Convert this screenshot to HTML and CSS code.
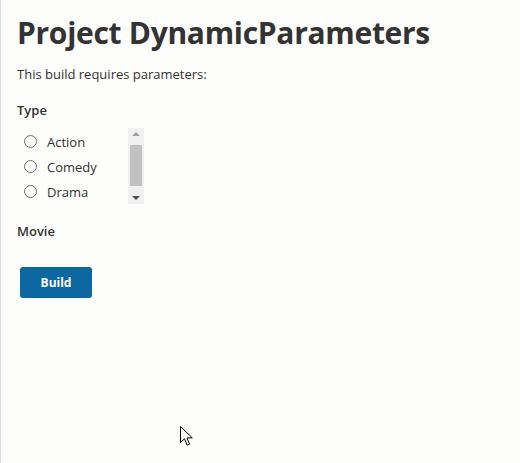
FILE: index.html
```html
<!DOCTYPE html>
<html lang="en">
<head>
<meta charset="utf-8">
<title>Project DynamicParameters</title>
<link rel="stylesheet" href="styles.css">
</head>
<body>
<main class="page">
  <h1 class="title">Project DynamicParameters</h1>
  <p class="intro">This build requires parameters:</p>

  <form class="params">
    <div class="param">
      <div class="param-name">Type</div>
      <div class="choice-box">
        <div class="choice-list">
          <label class="choice"><input type="radio" name="type" value="Action"><span>Action</span></label>
          <label class="choice"><input type="radio" name="type" value="Comedy"><span>Comedy</span></label>
          <label class="choice"><input type="radio" name="type" value="Drama"><span>Drama</span></label>
        </div>
        <div class="scrollbar" aria-hidden="true">
          <span class="arrow arrow-up"></span>
          <span class="track"><span class="thumb"></span></span>
          <span class="arrow arrow-down"></span>
        </div>
      </div>
    </div>

    <div class="param">
      <div class="param-name">Movie</div>
    </div>

    <button type="button" class="build-btn">Build</button>
  </form>

  <svg class="pointer" width="13" height="21" viewBox="0 0 13 21" aria-hidden="true">
    <path d="M0.5 0.5 L0.5 16.5 L4.5 12.8 L7.2 19.2 L9.6 18.2 L7 11.9 L12.3 11.9 Z" fill="#fff" stroke="#000" stroke-width="1" stroke-linejoin="miter"/>
  </svg>
</main>
</body>
</html>
```

FILE: styles.css
```css
html, body {
  margin: 0;
  height: 100%;
}

body {
  background: #fdfdfb;
  border-left: 1px solid #d5dfe9;
  box-sizing: border-box;
  font-family: "Open Sans", "Noto Sans", "Liberation Sans", sans-serif;
  color: #333;
}

.page {
  position: relative;
  min-height: 100%;
  padding: 13px 0 0 16px;
  box-sizing: border-box;
}

.title {
  margin: 0;
  font-size: 30px;
  line-height: 40px;
  font-weight: 700;
  color: #333;
  letter-spacing: -0.3px;
}

.intro {
  margin: 12px 0 0;
  font-size: 13px;
  line-height: 18px;
}

.params {
  display: flex;
  flex-direction: column;
  align-items: flex-start;
}

.param-name {
  margin-top: 18px;
  font-size: 13px;
  line-height: 18px;
  font-weight: 600;
}

.choice-box {
  display: flex;
  margin-top: 9px;
  height: 76px;
}

.choice-list {
  width: 111px;
  height: 76px;
  overflow: hidden;
  padding: 1px 0 0 7px;
  box-sizing: border-box;
}

.choice {
  display: flex;
  align-items: center;
  gap: 10px;
  height: 25px;
  font-size: 13px;
}

.choice input {
  appearance: none;
  -webkit-appearance: none;
  width: 13px;
  height: 13px;
  margin: 0;
  border: 1px solid #6f6f6f;
  border-radius: 50%;
  background: #fff;
  box-sizing: border-box;
}

/* decorative scrollbar beside the choice list */
.scrollbar {
  width: 16px;
  height: 76px;
  background: #f0f0f0;
  display: flex;
  flex-direction: column;
  align-items: center;
}

.arrow {
  height: 12px;
  width: 16px;
  display: flex;
  align-items: center;
  justify-content: center;
}

.arrow::before {
  content: "";
  width: 0;
  height: 0;
  border-left: 4px solid transparent;
  border-right: 4px solid transparent;
}

.arrow-up::before {
  border-bottom: 4px solid #a3a3a3;
}

.arrow-down::before {
  border-top: 4px solid #505050;
}

.track {
  flex: 1;
  width: 16px;
  display: flex;
  justify-content: center;
  padding-top: 5px;
  box-sizing: border-box;
}

.thumb {
  width: 12px;
  height: 41px;
  background: #c1c1c1;
}

.build-btn {
  margin: 27px 0 0 3px;
  width: 72px;
  height: 31px;
  border: none;
  border-radius: 3px;
  background: #0b68a1;
  color: #fff;
  font-family: inherit;
  font-size: 12px;
  font-weight: 700;
  cursor: pointer;
}

.pointer {
  position: absolute;
  left: 179px;
  top: 426px;
}
```
